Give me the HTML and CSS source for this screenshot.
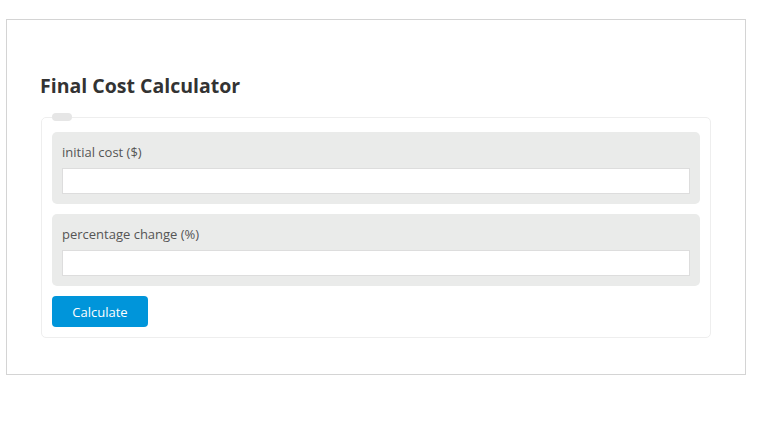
FILE: index.html
```html
<!DOCTYPE html>
<html lang="en">
<head>
    <meta charset="UTF-8">
    <meta name="viewport" content="width=device-width, initial-scale=1.0">
    <title>Final Cost Calculator</title>
    <link rel="stylesheet" href="styles.css">
</head>
<body>
    <div class="container">
        <h1>Final Cost Calculator</h1>
        <fieldset class="calc">
            <legend></legend>
            <div class="form-group">
                <label for="cost">initial cost ($)</label>
                <input type="text" id="cost">
            </div>
            <div class="form-group">
                <label for="change">percentage change (%)</label>
                <input type="text" id="change">
            </div>
            <button type="button">Calculate</button>
        </fieldset>
    </div>
</body>
</html>
```

FILE: styles.css
```css
body {
    font-family: "Open Sans", Arial, sans-serif;
    margin: 0;
    padding: 19px 0 0 6px;
    background-color: #fff;
    color: #555;
}

.container {
    width: 740px;
    height: 356px;
    box-sizing: border-box;
    border: 1px solid #d4d4d4;
    padding: 53px 34px 0 34px;
}

h1 {
    margin: 0 0 14px -1px;
    font-size: 19.5px;
    font-weight: 700;
    color: #333;
    line-height: 26px;
}

.calc {
    margin: 0;
    padding: 11px 10px 10px 10px;
    border: 1px solid #eee;
    border-radius: 5px;
}

.calc legend {
    width: 20px;
    height: 8px;
    padding: 0;
    margin-left: 0;
    background-color: #e6e6e6;
    border-radius: 5px;
}

.form-group {
    background-color: #eaebea;
    border-radius: 5px;
    padding: 11px 10px 10px 10px;
    margin-bottom: 10px;
}

label {
    display: block;
    font-size: 13px;
    line-height: 18px;
    margin-bottom: 7px;
    color: #555;
}

input[type="text"] {
    display: block;
    width: 100%;
    height: 26px;
    box-sizing: border-box;
    border: 1px solid #ddd;
    background-color: #fff;
    margin: 0;
}

button {
    background-color: #0095da;
    color: #fff;
    border: none;
    border-radius: 4px;
    font-family: "Open Sans", Arial, sans-serif;
    font-size: 13px;
    width: 96px;
    height: 31px;
    cursor: pointer;
}
```
